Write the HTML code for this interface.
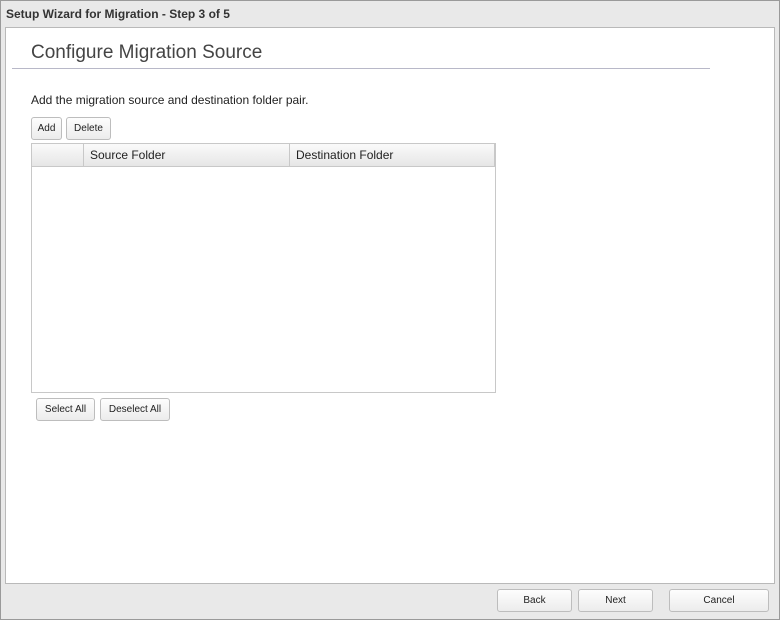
<!DOCTYPE html>
<html><head><style>
*{margin:0;padding:0;box-sizing:border-box}
body{width:780px;height:620px;background:#e9e9e9;font-family:"Liberation Sans",sans-serif;position:relative;overflow:hidden;box-shadow:inset 0 0 0 1px #9a9a9a}
.t{position:absolute;left:6px;top:7px;font-size:12px;font-weight:bold;color:#333}
.p{position:absolute;left:5px;top:27px;width:770px;height:557px;background:#fff;border:1px solid #b9b9b9}
.h{position:absolute;left:31px;top:42px;font-size:19px;color:#444}
.hl{position:absolute;left:12px;top:68px;width:698px;height:1px;background:#b8b8c8}
.d{position:absolute;left:31px;top:93px;font-size:12px;color:#222}
.b{position:absolute;height:23px;border:1px solid #bdbdbd;border-radius:3px;background:linear-gradient(#fdfdfd,#ececec);font-size:10px;color:#222;text-align:center;line-height:21px}
.g{position:absolute;left:31px;top:143px;width:465px;height:250px;border:1px solid #c8c8c8;background:#fff}
.gh{position:absolute;left:0;top:0;width:463px;height:23px;background:linear-gradient(#fafafa,#e6e6e6);border-bottom:1px solid #c8c8c8;font-size:12px;color:#222}
.c{position:absolute;top:0;height:22px;line-height:23px;border-right:1px solid #c8c8c8;padding-left:6px}
</style></head><body>
<div class="t">Setup Wizard for Migration - Step 3 of 5</div>
<div class="p"></div>
<div class="h">Configure Migration Source</div>
<div class="hl"></div>
<div class="d">Add the migration source and destination folder pair.</div>
<div class="b" style="left:31px;top:117px;width:31px">Add</div>
<div class="b" style="left:66px;top:117px;width:45px">Delete</div>
<div class="g"><div class="gh">
<div class="c" style="left:0;width:52px"></div>
<div class="c" style="left:52px;width:206px">Source Folder</div>
<div class="c" style="left:258px;width:205px">Destination Folder</div>
</div></div>
<div class="b" style="left:36px;top:398px;width:59px">Select All</div>
<div class="b" style="left:100px;top:398px;width:70px">Deselect All</div>
<div class="b" style="left:497px;top:589px;width:75px">Back</div>
<div class="b" style="left:578px;top:589px;width:75px">Next</div>
<div class="b" style="left:669px;top:589px;width:100px">Cancel</div>
</body></html>
